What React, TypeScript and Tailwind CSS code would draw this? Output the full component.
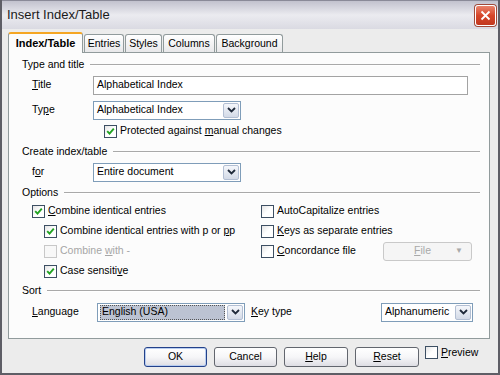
import React from "react";

const U = ({ children }: { children: React.ReactNode }) => (
  <span className="underline underline-offset-1">{children}</span>
);

const Chevron = ({ color = "#1f2a3a" }: { color?: string }) => (
  <svg width="9" height="6" viewBox="0 0 9 6">
    <path d="M1 1 L4.5 4.5 L8 1" stroke={color} strokeWidth="1.8" fill="none" />
  </svg>
);

const Box = ({ checked = false, disabled = false }: { checked?: boolean; disabled?: boolean }) => (
  <div
    className={`w-[13px] h-[13px] border shrink-0 flex items-center justify-center ${
      disabled ? "border-[#c8c8c8] bg-[#f8f8f8]" : "border-[#3d4f63] bg-linear-to-br from-[#e4e4e4] via-white to-white"
    }`}
  >
    {checked && (
      <svg width="9" height="9" viewBox="0 0 9 9">
        <path d="M1.2 4.2 L3.5 6.6 L7.8 1.6" stroke="#22a322" strokeWidth="1.9" fill="none" />
      </svg>
    )}
  </div>
);

const Check = ({
  checked = false,
  disabled = false,
  children,
  className = "",
}: {
  checked?: boolean;
  disabled?: boolean;
  children: React.ReactNode;
  className?: string;
}) => (
  <div className={`flex items-center gap-[3px] ${disabled ? "text-[#a6a6a6]" : ""} ${className}`}>
    <Box checked={checked} disabled={disabled} />
    <span className="whitespace-nowrap">{children}</span>
  </div>
);

const Select = ({
  value,
  className = "",
  focused = false,
}: {
  value: string;
  className?: string;
  focused?: boolean;
}) => (
  <div className={`flex items-center h-[19px] border border-[#7f9db9] bg-white ${className}`}>
    <div className={`flex-1 h-full flex items-center pl-[2px] ${focused ? "p-[1px]" : ""}`}>
      {focused ? (
        <div className="w-full h-full flex items-center bg-[#bcc3d2] outline-1 outline-dotted outline-[#555] -outline-offset-1 pl-[2px]">
          {value}
        </div>
      ) : (
        <span className="pl-[1px] whitespace-nowrap">{value}</span>
      )}
    </div>
    <div className="w-[16px] h-[15px] mx-[1px] rounded-[2px] border border-[#b3bfd3] bg-linear-to-b from-[#f5f7fb] to-[#d3dae7] flex items-center justify-center">
      <Chevron />
    </div>
  </div>
);

const Section = ({ label, className = "" }: { label: string; className?: string }) => (
  <div className={`flex items-center h-[16px] pl-[13px] pr-[9px] ${className}`}>
    <span className="whitespace-nowrap">{label}</span>
    <div className="flex-1 ml-[6px] border-t border-[#a9a9a9] border-b border-b-white" />
  </div>
);

const Btn = ({ children, def = false, w = "w-[63px]" }: { children: React.ReactNode; def?: boolean; w?: string }) => (
  <div
    className={`${w} h-[20px] rounded-[3px] border flex items-center justify-center bg-linear-to-b from-white via-[#f6f6f8] to-[#dedee4] ${
      def ? "border-[#23418a] shadow-[inset_0_0_0_1px_#b8cdf0]" : "border-[#62666e]"
    }`}
  >
    {children}
  </div>
);

const Tab = ({ children, w, active = false }: { children: React.ReactNode; w: string; active?: boolean }) =>
  active ? (
    <div
      className={`${w} h-[21px] -mb-px relative z-10 bg-[#fcfcfc] border border-b-0 border-[#919b9c] rounded-t-[3px] flex items-center justify-center font-bold text-[11px] border-t-2 border-t-[#f5a623]`}
    >
      {children}
    </div>
  ) : (
    <div
      className={`${w} h-[18px] bg-linear-to-b from-white to-[#e8e8ea] border border-b-0 border-[#919b9c] rounded-t-[3px] flex items-center justify-center`}
    >
      {children}
    </div>
  );

export default function App() {
  return (
    <div className="w-[500px] h-[375px] overflow-hidden bg-[#ececec] flex flex-col border-x-2 border-b-2 border-[#5e5e66] font-['Liberation_Sans',Arial,sans-serif] text-[10.5px] text-black">
      {/* Title bar */}
      <div className="h-[29px] shrink-0 flex items-center justify-between bg-linear-to-b from-[#c2c2ce] via-[#ebebf0] to-[#dadae2] border-t border-[#8a8a98]">
        <span className="pl-[5px] text-[13px] text-[#1a1a1a]">Insert Index/Table</span>
        <div className="w-[21px] h-[21px] mr-[2px] rounded-[3px] border border-white bg-linear-to-b from-[#e9826a] via-[#d6462a] to-[#c2381e] flex items-center justify-center shadow-[0_0_0_1px_#a04a3a]">
          <svg width="11" height="11" viewBox="0 0 11 11">
            <path d="M1.5 1.5 L9.5 9.5 M9.5 1.5 L1.5 9.5" stroke="white" strokeWidth="1.8" />
          </svg>
        </div>
      </div>

      {/* Tabs */}
      <div className="h-[23px] shrink-0 flex items-end pl-[6px] gap-[1px]">
        <Tab w="w-[75px]" active>
          Index/Table
        </Tab>
        <Tab w="w-[40px]">Entries</Tab>
        <Tab w="w-[37px]">Styles</Tab>
        <Tab w="w-[52px]">Columns</Tab>
        <Tab w="w-[67px]">Background</Tab>
      </div>

      {/* Panel */}
      <div className="ml-[6px] w-[482px] h-[287px] shrink-0 border border-[#919b9c] bg-[#fcfcfc] flex flex-col">
        <Section label="Type and title" className="mt-[4px]" />
        <div className="mt-[2px] h-[20px] flex items-center pl-[23px]">
          <span className="w-[61px]">
            <U>T</U>itle
          </span>
          <div className="w-[375px] h-[19px] border border-[#a3a3a3] bg-white flex items-center pl-[3px]">
            Alphabetical Index
          </div>
        </div>
        <div className="mt-[5px] h-[20px] flex items-center pl-[23px]">
          <span className="w-[61px]">
            Ty<U>p</U>e
          </span>
          <Select value="Alphabetical Index" className="w-[148px]" />
        </div>
        <div className="mt-[3px] h-[16px] flex items-center pl-[95px]">
          <Check checked>
            Protected against <U>m</U>anual changes
          </Check>
        </div>

        <Section label="Create index/table" className="mt-[5px]" />
        <div className="mt-[2px] h-[20px] flex items-center pl-[23px]">
          <span className="w-[61px]">
            f<U>o</U>r
          </span>
          <Select value="Entire document" className="w-[148px]" />
        </div>

        <Section label="Options" className="mt-[3px]" />
        <div className="flex pl-[23px]">
          <div className="w-[229px] flex flex-col">
            <div className="h-[20px] flex items-center">
              <Check checked>
                <U>C</U>ombine identical entries
              </Check>
            </div>
            <div className="h-[20px] flex items-center pl-[12px]">
              <Check checked>
                Combine identical entries with p or <U>p</U>p
              </Check>
            </div>
            <div className="h-[20px] flex items-center pl-[12px]">
              <Check disabled>
                Combine <U>w</U>ith -
              </Check>
            </div>
            <div className="h-[20px] flex items-center pl-[12px]">
              <Check checked>
                Case sensiti<U>v</U>e
              </Check>
            </div>
          </div>
          <div className="flex flex-col">
            <div className="h-[20px] flex items-center">
              <Check>AutoCapitalize entries</Check>
            </div>
            <div className="h-[20px] flex items-center">
              <Check>
                <U>K</U>eys as separate entries
              </Check>
            </div>
            <div className="h-[20px] flex items-center">
              <Check className="w-[122px]">
                <U>C</U>oncordance file
              </Check>
              <div className="w-[89px] h-[19px] rounded-[3px] border border-[#c9c9c9] bg-[#f5f5f5] flex items-center text-[#a9a9a9]">
                <span className="flex-1 text-center pl-[6px]">
                  <U>F</U>ile
                </span>
                <span className="pr-[8px] text-[8px]">▼</span>
              </div>
            </div>
          </div>
        </div>

        <Section label="Sort" className="mt-[2px]" />
        <div className="mt-[3px] h-[20px] flex items-center pl-[23px]">
          <span className="w-[65px]">
            <U>L</U>anguage
          </span>
          <Select value="English (USA)" className="w-[148px]" focused />
          <span className="ml-[6px] w-[130px]">
            <U>K</U>ey type
          </span>
          <Select value="Alphanumeric" className="w-[92px]" />
        </div>
      </div>

      {/* Buttons */}
      <div className="mt-[7px] flex items-start pl-[142px]">
        <div className="mt-[1px] flex gap-[7px]">
          <Btn def>OK</Btn>
          <Btn>Cancel</Btn>
          <Btn w="w-[64px]">
            <U>H</U>elp
          </Btn>
          <Btn w="w-[64px]">
            <U>R</U>eset
          </Btn>
        </div>
        <div className="ml-[6px] -mt-[1px]">
          <Check>
            <U>P</U>review
          </Check>
        </div>
      </div>
    </div>
  );
}
